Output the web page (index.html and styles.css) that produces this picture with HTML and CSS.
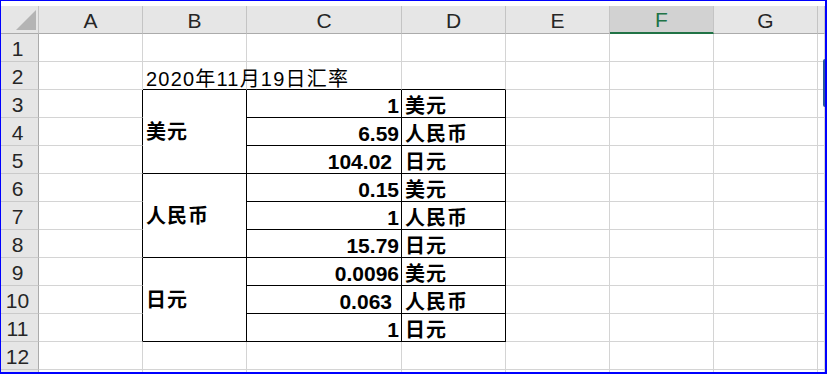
FILE: index.html
```html
<!DOCTYPE html>
<html>
<head>
  <title>汇率</title>
  <link rel="stylesheet" href="styles.css">
</head>
<body>
  <div class="frame">
    <div class="top-strip"></div>

    <div class="sheet">
      <!-- column headers -->
      <div class="ch corner"><span class="corner-mark"></span></div>
      <div class="ch">A</div>
      <div class="ch">B</div>
      <div class="ch">C</div>
      <div class="ch">D</div>
      <div class="ch">E</div>
      <div class="ch selected">F</div>
      <div class="ch">G</div>
      <div class="ch"></div>

      <!-- row 1 -->
      <div class="rh">1</div>
      <div class="cell"></div><div class="cell"></div><div class="cell"></div><div class="cell"></div>
      <div class="cell"></div><div class="cell"></div><div class="cell"></div><div class="cell"></div>

      <!-- row 2 -->
      <div class="rh">2</div>
      <div class="cell"></div>
      <div class="cell top-edge"><span class="title">2020年11月19日汇率</span></div>
      <div class="cell top-edge"></div>
      <div class="cell top-edge"></div>
      <div class="cell"></div><div class="cell"></div><div class="cell"></div><div class="cell"></div>

      <!-- 美元 -->
      <div class="rh">3</div>
      <div class="cell left-edge"></div>
      <div class="cell group">美元</div>
      <div class="cell num">1</div>
      <div class="cell unit">美元</div>
      <div class="cell"></div><div class="cell"></div><div class="cell"></div><div class="cell"></div>

      <div class="rh">4</div>
      <div class="cell left-edge"></div>
      <div class="cell num">6.59</div>
      <div class="cell unit">人民币</div>
      <div class="cell"></div><div class="cell"></div><div class="cell"></div><div class="cell"></div>

      <div class="rh">5</div>
      <div class="cell left-edge"></div>
      <div class="cell num pad">104.02</div>
      <div class="cell unit">日元</div>
      <div class="cell"></div><div class="cell"></div><div class="cell"></div><div class="cell"></div>

      <!-- 人民币 -->
      <div class="rh">6</div>
      <div class="cell left-edge"></div>
      <div class="cell group">人民币</div>
      <div class="cell num">0.15</div>
      <div class="cell unit">美元</div>
      <div class="cell"></div><div class="cell"></div><div class="cell"></div><div class="cell"></div>

      <div class="rh">7</div>
      <div class="cell left-edge"></div>
      <div class="cell num">1</div>
      <div class="cell unit">人民币</div>
      <div class="cell"></div><div class="cell"></div><div class="cell"></div><div class="cell"></div>

      <div class="rh">8</div>
      <div class="cell left-edge"></div>
      <div class="cell num">15.79</div>
      <div class="cell unit">日元</div>
      <div class="cell"></div><div class="cell"></div><div class="cell"></div><div class="cell"></div>

      <!-- 日元 -->
      <div class="rh">9</div>
      <div class="cell left-edge"></div>
      <div class="cell group">日元</div>
      <div class="cell num">0.0096</div>
      <div class="cell unit">美元</div>
      <div class="cell"></div><div class="cell"></div><div class="cell"></div><div class="cell"></div>

      <div class="rh">10</div>
      <div class="cell left-edge"></div>
      <div class="cell num pad">0.063</div>
      <div class="cell unit">人民币</div>
      <div class="cell"></div><div class="cell"></div><div class="cell"></div><div class="cell"></div>

      <div class="rh">11</div>
      <div class="cell left-edge"></div>
      <div class="cell num">1</div>
      <div class="cell unit">日元</div>
      <div class="cell"></div><div class="cell"></div><div class="cell"></div><div class="cell"></div>

      <!-- row 12 -->
      <div class="rh">12</div>
      <div class="cell"></div><div class="cell"></div><div class="cell"></div><div class="cell"></div>
      <div class="cell"></div><div class="cell"></div><div class="cell"></div><div class="cell"></div>

      <!-- row 13, cut off at the bottom -->
      <div class="rh"></div>
      <div class="cell"></div><div class="cell"></div><div class="cell"></div><div class="cell"></div>
      <div class="cell"></div><div class="cell"></div><div class="cell"></div><div class="cell"></div>
    </div>

    <div class="side-tab"></div>
  </div>
</body>
</html>
```

FILE: styles.css
```css
body {
  margin: 0;
  font-family: "Liberation Sans", "Noto Sans CJK SC", sans-serif;
  background-color: #ffffff;
}

.frame {
  position: relative;
  width: 827px;
  height: 374px;
  box-sizing: border-box;
  border-style: solid;
  border-color: #0000ff;
  border-width: 1px 2px 2px 1px;
  overflow: hidden;
  display: flex;
  flex-direction: column;
}

.top-strip {
  height: 5px;
  flex: none;
}

.sheet {
  display: grid;
  grid-template-columns: 38px 104px 104px 155px 104px 104px 104px 104px 1fr;
  grid-auto-rows: 28px;
  font-size: 20px;
  line-height: 20px;
  color: #000000;
}

.sheet > div {
  box-sizing: border-box;
  border-right: 1px solid #d4d4d4;
  border-bottom: 1px solid #d4d4d4;
  display: flex;
  align-items: flex-end;
  min-width: 0;
}

/* headers */
.sheet > .ch {
  background-color: #e6e6e6;
  border-right-color: #c4c4c4;
  border-bottom-color: #ababab;
  justify-content: center;
  padding-bottom: 2px;
  font-size: 21px;
  color: #262626;
}

.sheet > .ch.selected {
  background-color: #d2d2d2;
  color: #217346;
  border-bottom: 2px solid #217346;
}

.sheet > .corner {
  position: relative;
  border-right-color: #c4c4c4;
}

.corner-mark {
  position: absolute;
  right: 2px;
  bottom: 3px;
  width: 20px;
  height: 20px;
  background-color: #b4b4b4;
  clip-path: polygon(100% 0, 100% 100%, 0 100%);
}

.sheet > .rh {
  background-color: #e6e6e6;
  border-right-color: #ababab;
  border-bottom-color: #cacaca;
  justify-content: center;
  padding-right: 4px;
  padding-bottom: 2px;
  font-size: 21px;
  color: #262626;
}

/* cells */
.sheet > .cell {
  padding: 0 3px 1px 3px;
  overflow: visible;
}

.title {
  white-space: nowrap;
  letter-spacing: 1.2px;
  position: relative;
  top: 1px;
}

.sheet > .top-edge {
  border-bottom-color: #000000;
}

.sheet > .left-edge {
  border-right-color: #000000;
}

.sheet > .group {
  grid-row: span 3;
  align-items: center;
  font-weight: bold;
  letter-spacing: 1px;
  border-right-color: #000000;
  border-bottom-color: #000000;
  padding-bottom: 0;
}

.sheet > .num {
  justify-content: flex-end;
  font-size: 21px;
  font-weight: bold;
  padding-right: 2px;
  border-right-color: #000000;
  border-bottom-color: #000000;
}

.sheet > .num.pad {
  padding-right: 9px;
}

.sheet > .unit {
  font-weight: bold;
  letter-spacing: 1px;
  border-right-color: #000000;
  border-bottom-color: #000000;
}

/* panel tab peeking in at the right edge */
.side-tab {
  position: absolute;
  right: 0;
  top: 58px;
  width: 2px;
  height: 48px;
  background-color: #2b579a;
  border-radius: 2px 0 0 2px;
}
```
